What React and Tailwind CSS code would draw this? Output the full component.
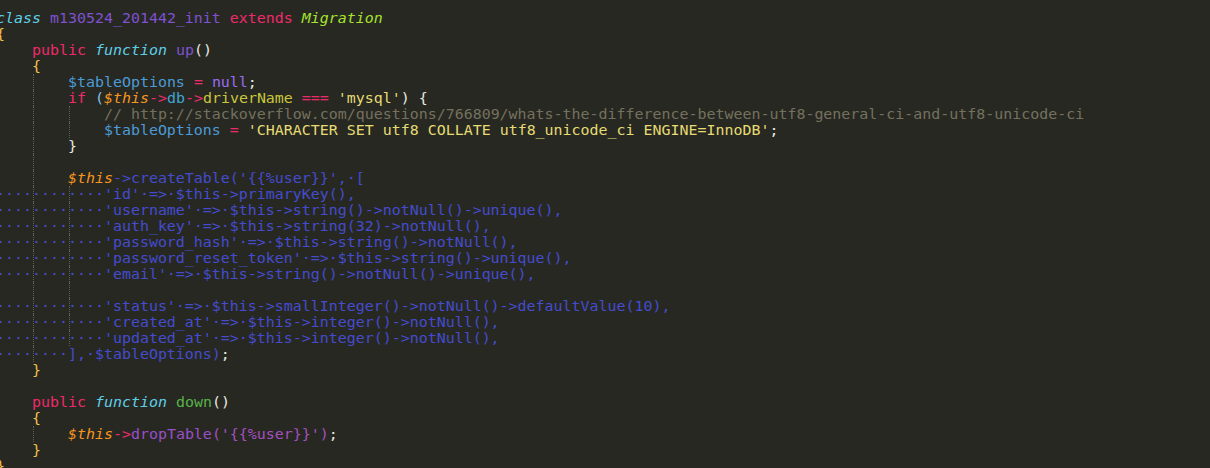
import React from 'react';

// token colour classes
const c = {
  kw: 'text-[#ee2a6c]',
  storage: 'text-[#5fcfe8] italic',
  name: 'text-[#7f52cf]',
  inherit: 'text-[#a6e22e] italic',
  plain: 'text-[#e8e8e0]',
  brace: 'text-[#f2c14a]',
  variable: 'text-[#4b9bd6]',
  constant: 'text-[#9a6cf0]',
  self: 'text-[#f5961f] italic',
  prop: 'text-[#3fa5d6]',
  member: 'text-[#c9c63c]',
  paren: 'text-[#86c2e6]',
  string: 'text-[#e6db74]',
  comment: 'text-[#75715e]',
  sel: 'text-[#444cce]',
  green: 'text-[#57b34a]',
  method: 'text-[#9a4fc8]',
  arg: 'text-[#a64fc0]',
};

const t = (text, cls) => ({ text, cls });

const sel = (text) => t(text, c.sel);

const dots = (n) => '\u00b7'.repeat(n);

const lines = [
  { guides: [], tokens: [t('class', c.storage), t(' '), t('m130524_201442_init', c.name), t(' '), t('extends', c.kw), t(' '), t('Migration', c.inherit)] },
  { guides: [], tokens: [t('{', c.brace)] },
  { guides: [], tokens: [t('    '), t('public', c.kw), t(' '), t('function', c.storage), t(' '), t('up', c.name), t('()', c.plain)] },
  { guides: [], tokens: [t('    '), t('{', c.brace)] },
  { guides: [4], tokens: [t('        '), t('$tableOptions', c.variable), t(' '), t('=', c.kw), t(' '), t('null', c.constant), t(';', c.plain)] },
  {
    guides: [4],
    tokens: [
      t('        '), t('if', c.kw), t(' '), t('(', c.paren), t('$this', c.self), t('->', c.kw), t('db', c.prop), t('->', c.kw),
      t('driverName', c.member), t(' '), t('===', c.kw), t(' '), t("'mysql'", c.string), t(') {', c.plain),
    ],
  },
  { guides: [4, 8], tokens: [t('            '), t('// http://stackoverflow.com/questions/766809/whats-the-difference-between-utf8-general-ci-and-utf8-unicode-ci', c.comment)] },
  {
    guides: [4, 8],
    tokens: [
      t('            '), t('$tableOptions', c.variable), t(' '), t('=', c.kw), t(' '),
      t("'CHARACTER SET utf8 COLLATE utf8_unicode_ci ENGINE=InnoDB'", c.string), t(';', c.plain),
    ],
  },
  { guides: [4], tokens: [t('        '), t('}', c.plain)] },
  { guides: [4], tokens: [] },
  { guides: [4], tokens: [t('        '), t('$this', c.self), sel("->createTable('{{%user}}',\u00b7[")] },
  { guides: [4, 8], tokens: [sel(dots(12) + "'id'\u00b7=>\u00b7$this->primaryKey(),")] },
  { guides: [4, 8], tokens: [sel(dots(12) + "'username'\u00b7=>\u00b7$this->string()->notNull()->unique(),")] },
  { guides: [4, 8], tokens: [sel(dots(12) + "'auth_key'\u00b7=>\u00b7$this->string(32)->notNull(),")] },
  { guides: [4, 8], tokens: [sel(dots(12) + "'password_hash'\u00b7=>\u00b7$this->string()->notNull(),")] },
  { guides: [4, 8], tokens: [sel(dots(12) + "'password_reset_token'\u00b7=>\u00b7$this->string()->unique(),")] },
  { guides: [4, 8], tokens: [sel(dots(12) + "'email'\u00b7=>\u00b7$this->string()->notNull()->unique(),")] },
  { guides: [4, 8], tokens: [] },
  { guides: [4, 8], tokens: [sel(dots(12) + "'status'\u00b7=>\u00b7$this->smallInteger()->notNull()->defaultValue(10),")] },
  { guides: [4, 8], tokens: [sel(dots(12) + "'created_at'\u00b7=>\u00b7$this->integer()->notNull(),")] },
  { guides: [4, 8], tokens: [sel(dots(12) + "'updated_at'\u00b7=>\u00b7$this->integer()->notNull(),")] },
  { guides: [4], tokens: [sel(dots(8) + '],\u00b7$tableOptions)'), t(';', c.plain)] },
  { guides: [], tokens: [t('    '), t('}', c.brace)] },
  { guides: [], tokens: [] },
  { guides: [], tokens: [t('    '), t('public', c.kw), t(' '), t('function', c.storage), t(' '), t('down', c.green), t('()', c.plain)] },
  { guides: [], tokens: [t('    '), t('{', c.brace)] },
  {
    guides: [4],
    tokens: [t('        '), t('$this', c.self), t('->', c.kw), t('dropTable', c.method), t("('{{%user}}')", c.arg), t(';', c.plain)],
  },
  { guides: [], tokens: [t('    '), t('}', c.brace)] },
  { guides: [], tokens: [t('}', c.brace)] },
];

const guideLeft = {
  4: 'left-[37px]',
  8: 'left-[73px]',
};

const CodeLine = ({ line }) => (
  <div className="relative h-4 leading-4 whitespace-pre">
    {line.guides.map((col) => (
      <span
        key={col}
        className={`absolute top-0 bottom-0 ${guideLeft[col]} border-l border-dotted border-[#5f5f57]`}
      />
    ))}
    {line.tokens.map((tok, i) => (
      <span key={i} className={tok.cls || 'text-[#e8e8e0]'}>
        {tok.text}
      </span>
    ))}
    {line.tokens.length === 0 && '\u00a0'}
  </div>
);

const App = () => {
  return (
    <div className="h-[468px] w-full overflow-hidden bg-[#272822] pt-[10px] font-['DejaVu_Sans_Mono',monospace] text-[14.95px]">
      <div className="-ml-1">
        {lines.map((line, i) => (
          <CodeLine key={i} line={line} />
        ))}
      </div>
    </div>
  );
};

export default App;
